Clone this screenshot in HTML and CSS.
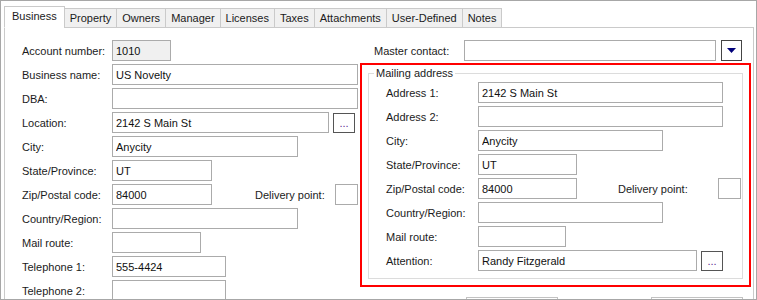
FILE: index.html
```html
<!DOCTYPE html>
<html lang="en">
<head>
    <meta charset="UTF-8">
    <meta name="viewport" content="width=device-width, initial-scale=1.0">
    <title>Business</title>

    <link rel="stylesheet" href="styles.css">
</head>
<body>
<div class="window">
    <div class="tabs">
        <div class="tab active">Business</div>
        <div class="tab">Property</div>
        <div class="tab">Owners</div>
        <div class="tab">Manager</div>
        <div class="tab">Licenses</div>
        <div class="tab">Taxes</div>
        <div class="tab">Attachments</div>
        <div class="tab">User-Defined</div>
        <div class="tab">Notes</div>
        <div class="tab-fill"></div>
    </div>

    <div class="panel">
        <div class="col-left">
            <div class="row"><label>Account number:</label><input class="f-short readonly" value="1010" readonly></div>
            <div class="row"><label>Business name:</label><input class="f-wide" value="US Novelty"></div>
            <div class="row"><label>DBA:</label><input class="f-wide" value=""></div>
            <div class="row"><label>Location:</label><input class="f-loc" value="2142 S Main St"><button class="more">...</button></div>
            <div class="row"><label>City:</label><input class="f-city" value="Anycity"></div>
            <div class="row"><label>State/Province:</label><input class="f-zip" value="UT"></div>
            <div class="row">
                <label>Zip/Postal code:</label><input class="f-zip" value="84000">
                <label class="delivery-label">Delivery point:</label><input class="f-box" value="">
            </div>
            <div class="row"><label>Country/Region:</label><input class="f-city" value=""></div>
            <div class="row"><label>Mail route:</label><input class="f-route" value=""></div>
            <div class="row"><label>Telephone 1:</label><input class="f-phone" value="555-4424"></div>
            <div class="row"><label>Telephone 2:</label><input class="f-phone" value=""></div>
        </div>

        <div class="col-right">
            <div class="row master">
                <label>Master contact:</label><input class="f-master" value="">
                <button class="drop">
                    <svg width="9" height="5" viewBox="0 0 9 5"><polygon points="0,0 9,0 4.5,5" fill="#00007a"/></svg>
                </button>
            </div>

            <div class="highlight">
                <fieldset class="group">
                    <legend>Mailing address</legend>
                    <div class="group-rows">
                        <div class="row"><label>Address 1:</label><input class="f-wide" value="2142 S Main St"></div>
                        <div class="row"><label>Address 2:</label><input class="f-wide" value=""></div>
                        <div class="row"><label>City:</label><input class="f-city" value="Anycity"></div>
                        <div class="row"><label>State/Province:</label><input class="f-zip" value="UT"></div>
                        <div class="row">
                            <label>Zip/Postal code:</label><input class="f-zip" value="84000">
                            <label class="delivery-label">Delivery point:</label><input class="f-box" value="">
                        </div>
                        <div class="row"><label>Country/Region:</label><input class="f-city" value=""></div>
                        <div class="row"><label>Mail route:</label><input class="f-route" value=""></div>
                        <div class="row"><label>Attention:</label><input class="f-attn" value="Randy Fitzgerald"><button class="more">...</button></div>
                    </div>
                </fieldset>
            </div>

            <div class="bottom-row">
                <div class="stub"></div>
                <div class="stub"></div>
            </div>
        </div>
    </div>
</div>
</body>
</html>
```

FILE: styles.css
```css
body {
    margin: 0;
    font-family: "Liberation Sans", Arial, sans-serif;
    font-size: 11px;
    color: #1b1b1b;
}

.window {
    width: 757px;
    height: 300px;
    box-sizing: border-box;
    border: 1px solid #a7a7a7;
    overflow: hidden;
    display: flex;
    flex-flow: column;
    background: #fff;
}

/* tab strip */
.tabs {
    display: flex;
    align-items: flex-end;
    margin: 5px 2px 0 3px;
}

.tab {
    height: 20px;
    box-sizing: border-box;
    padding: 0 5px;
    display: flex;
    align-items: center;
    background: #f0f0f0;
    border: 1px solid #cacaca;
    margin-left: -1px;
    white-space: nowrap;
}

.tab.active {
    height: 22px;
    margin-left: 0;
    padding: 0 7px 2px;
    background: #fff;
    border-bottom-color: #fff;
}

.tab-fill {
    flex: 1;
    border-bottom: 1px solid #cacaca;
}

.panel {
    flex: 1;
    display: flex;
    margin: 0 2px 0 3px;
    padding: 12px 0 0 17px;
    border-left: 1px solid #cacaca;
    border-right: 1px solid #cacaca;
}

.col-left {
    width: 336px;
    margin-right: 2px;
}

.col-right {
    width: 391px;
}

/* form rows */
.row {
    display: flex;
    align-items: center;
    height: 21px;
    margin-bottom: 3px;
}

.row label {
    width: 90px;
    flex: none;
}

.group .row label {
    width: 92px;
}

.row .delivery-label {
    width: auto;
    margin-left: 43px;
}

.group .row .delivery-label {
    width: auto;
    margin-left: 41px;
}

input {
    height: 21px;
    box-sizing: border-box;
    border: 1px solid #ababab;
    padding: 0 3px;
    margin: 0;
    font: inherit;
    color: #111;
    background: #fff;
    outline: none;
}

input.readonly {
    background: #f0f0f0;
}

.f-short { width: 59px; }
.f-wide { width: 246px; }
.f-loc { width: 217px; }
.f-attn { width: 219px; }
.f-city { width: 186px; }
.f-zip { width: 100px; }
.f-route { width: 89px; }
.f-phone { width: 114px; }
.f-master { width: 252px; }
.f-box { width: 23px; margin-left: auto; }

.group .f-wide { width: 245px; }
.group .f-city { width: 185px; }
.group .f-zip { width: 99px; }
.group .f-route { width: 88px; }
.group .f-box { margin-right: 1px; }

button {
    font: inherit;
    margin: 0;
    padding: 0;
    background: #fff;
    border: 1px solid #555;
    box-sizing: border-box;
}

.more {
    width: 22px;
    height: 20px;
    margin-left: 4px;
    color: #5a2d91;
    line-height: 16px;
}

.drop {
    width: 21px;
    height: 21px;
    margin-left: 5px;
    display: flex;
    align-items: center;
    justify-content: center;
    border-color: #444;
}

/* master contact + mailing address */
.master {
    padding-left: 14px;
    margin-bottom: 2px;
}

.highlight {
    height: 224px;
    box-sizing: border-box;
    border: 2px solid #f00;
}

.group {
    height: 212px;
    box-sizing: border-box;
    margin: 2px 6px 0 6px;
    padding: 0 0 0 5px;
    border: 1px solid #dcdcdc;
}

.group legend {
    padding: 0 2px;
    line-height: 13px;
}

.group-rows {
    margin-top: 2px;
    padding-left: 12px;
}

.bottom-row {
    display: flex;
    gap: 93px;
    margin-top: 10px;
    padding-left: 106px;
}

.stub {
    flex: none;
    width: 90px;
    height: 20px;
    border: 1px solid #c2c2c2;
}
```
